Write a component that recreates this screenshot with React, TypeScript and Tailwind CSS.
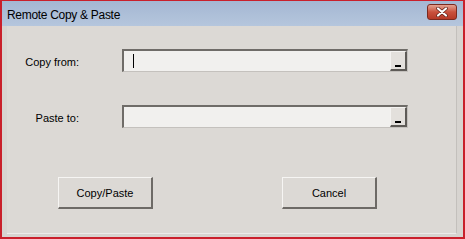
import React from "react";

const font = { fontFamily: '"Liberation Sans", Arial, sans-serif' };

function PathInput({ caret }: { caret?: boolean }) {
  return (
    <div className="relative flex w-[286px] h-[23px] border-t-2 border-l-2 border-t-[#6f6c68] border-l-[#6f6c68] border-b border-r border-b-[#c4c1bd] border-r-[#c4c1bd] bg-[#f1f0ee]">
      <div className="flex-1 flex items-center pl-[9px]">
        {caret && <div className="w-px h-[14px] bg-black" />}
      </div>
      <div className="w-[17px] h-[20px] bg-[#e3e0dc] border-l border-t border-l-[#f4f3f1] border-t-[#f4f3f1] border-r-2 border-b-2 border-r-[#5e5b57] border-b-[#5e5b57] flex items-end justify-center pb-[2px]">
        <div className="w-[6px] h-[2px] bg-black" />
      </div>
    </div>
  );
}

function Btn({ label }: { label: string }) {
  return (
    <div className="w-[95px] h-[32px] flex items-center justify-center pt-px bg-[#dcd9d5] border-t border-l border-t-[#f6f5f3] border-l-[#f6f5f3] border-r-2 border-b-2 border-r-[#6d6a66] border-b-[#6d6a66] text-[11px] text-black">
      {label}
    </div>
  );
}

export default function App() {
  return (
    <div
      className="w-[465px] h-[239px] flex flex-col bg-[#d7d4d0] border-t border-l-2 border-r-2 border-b-2 border-[#c9202b] overflow-hidden"
      style={font}
    >
      <div className="h-[25px] shrink-0 flex items-start justify-between pl-[5px] pr-[6px] bg-gradient-to-b from-[#a4b7d2] to-[#b5c6dd]">
        <span className="text-[12px] tracking-[-0.3px] text-black mt-[5px]">Remote Copy &amp; Paste</span>
        <div className="mt-[3px] w-[30px] h-[16px] rounded-[3px] border border-[#7b2a1f] bg-gradient-to-b from-[#e2a190] via-[#c9513d] to-[#b63a27] flex items-center justify-center">
          <svg width="12" height="10" viewBox="0 0 12 10">
            <path d="M2 1.5 L10 8.5 M10 1.5 L2 8.5" stroke="#5a1e16" strokeWidth="3.6" strokeLinecap="round" />
            <path d="M2 1.5 L10 8.5 M10 1.5 L2 8.5" stroke="#ffffff" strokeWidth="2.2" strokeLinecap="round" />
          </svg>
        </div>
      </div>
      <div className="flex-1 ml-[5px] mr-[6px] mb-[3px] bg-[#dcd9d5] border-r border-b border-r-[#c3c0bc] border-b-[#ecebe9] pt-[23px] text-[11px] text-black">
        <div className="flex items-center">
          <div className="w-[72px] text-right pt-[4px]">Copy from:</div>
          <div className="ml-[43px]">
            <PathInput caret />
          </div>
        </div>
        <div className="flex items-center mt-[33px]">
          <div className="w-[72px] text-right pt-[4px]">Paste to:</div>
          <div className="ml-[43px]">
            <PathInput />
          </div>
        </div>
        <div className="flex mt-[49px]">
          <div className="ml-[51px]">
            <Btn label="Copy/Paste" />
          </div>
          <div className="ml-[129px]">
            <Btn label="Cancel" />
          </div>
        </div>
      </div>
    </div>
  );
}
